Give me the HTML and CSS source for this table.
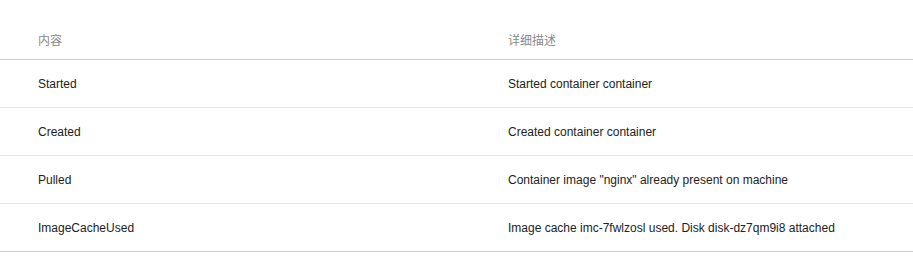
FILE: index.html
```html
<!DOCTYPE html>
<html lang="zh-CN">
<head>
  <meta charset="UTF-8">
  <title>事件</title>
  <link rel="stylesheet" href="styles.css">
</head>
<body>

<!-- EVENTS TABLE -->
<div class="events">
  <div class="row head">
    <div class="cell">内容</div>
    <div class="cell">详细描述</div>
  </div>
  <div class="row">
    <div class="cell">Started</div>
    <div class="cell">Started container container</div>
  </div>
  <div class="row">
    <div class="cell">Created</div>
    <div class="cell">Created container container</div>
  </div>
  <div class="row">
    <div class="cell">Pulled</div>
    <div class="cell">Container image "nginx" already present on machine</div>
  </div>
  <div class="row last">
    <div class="cell">ImageCacheUsed</div>
    <div class="cell">Image cache imc-7fwlzosl used. Disk disk-dz7qm9i8 attached</div>
  </div>
</div>

</body>
</html>
```

FILE: styles.css
```css
/* --- Global --- */
body { margin: 0; padding: 0; background: #fff; font-family: "Liberation Sans", "Noto Sans CJK SC", sans-serif; font-size: 12px; color: #222; }

/* --- Events table --- */
.events { padding-top: 20px; }
.row {
  display: grid;
  grid-template-columns: 470px 1fr;
  height: 47px;
  align-items: center;
  border-bottom: 1px solid #e6e7eb;
}
.cell { padding-left: 38px; white-space: nowrap; }

.row.head { height: 39px; color: #888; border-bottom-color: #cfd2d9; }
.row.last { border-bottom-color: #cfd2d9; }
```
